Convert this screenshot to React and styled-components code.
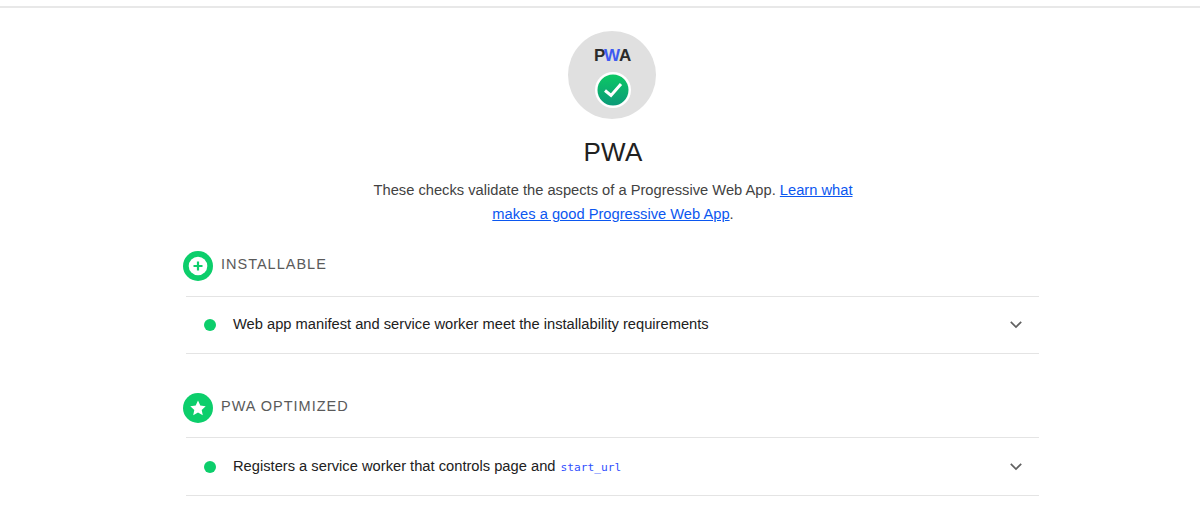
import React from "react";
import styled, { createGlobalStyle } from "styled-components";

const Global = createGlobalStyle`
  html, body { margin: 0; padding: 0; background: #fff; }
  body { font-family: "Liberation Sans", Arial, sans-serif; color: #212121; }
`;

const Page = styled.div`
  width: 1200px;
  height: 530px;
  overflow: hidden;
  padding-top: 6px;
  box-sizing: border-box;
`;
const TopRule = styled.div`
  height: 2px;
  background: #e8e8e8;
`;
const Header = styled.header`
  display: flex;
  flex-direction: column;
  align-items: center;
  padding-top: 23px;
  padding-left: 26px;
`;
const Gauge = styled.div`
  position: relative;
  width: 88px;
  height: 88px;
  margin-right: 2px;
  border-radius: 50%;
  background: #e0e0e0;
  display: flex;
  justify-content: center;
`;
const Logo = styled.div`
  margin-top: 18px;
  height: 14px;
  line-height: 14px;
  font-size: 17px;
  font-weight: 700;
  letter-spacing: -1.2px;
  color: #2b2b2b;
  display: flex;
`;
const LogoW = styled.span`
  color: #3d5af1;
`;
const Badge = styled.div`
  position: absolute;
  left: 27px;
  top: 41px;
  width: 36px;
  height: 36px;
  display: block;
`;
const Title = styled.h1`
  margin: 17px 0 0 0;
  font-size: 26px;
  line-height: 32px;
  font-weight: 400;
  letter-spacing: 0.2px;
  color: #212121;
`;
const Description = styled.p`
  margin: 10px 0 0 0;
  width: 490px;
  font-size: 14.7px;
  line-height: 24px;
  text-align: center;
  color: #424242;
`;
const Link = styled.a`
  color: #0b57f0;
  text-decoration: underline;
`;
const Content = styled.main`
  width: 853px;
  margin: 0 0 0 186px;
`;
const Group = styled.section`
  margin-top: ${(p) => p.$top}px;
`;
const GroupHead = styled.div`
  display: flex;
  align-items: center;
  gap: 8px;
  height: 30px;
  margin: 0 0 ${(p) => p.$gap}px -3px;
`;
const GroupIcon = styled.svg`
  width: 30px;
  height: 30px;
  flex: none;
`;
const GroupTitle = styled.h2`
  margin: -4px 0 0 0;
  font-size: 14.5px;
  font-weight: 400;
  letter-spacing: 1px;
  color: #5a5a5a;
  text-transform: uppercase;
`;
const Row = styled.div`
  display: flex;
  align-items: center;
  height: ${(p) => p.$height}px;
  border-top: 1px solid #e4e4e4;
  border-bottom: 1px solid #e4e4e4;
  padding-left: 18px;
  padding-right: 16px;
`;
const Dot = styled.span`
  width: 12px;
  height: 12px;
  border-radius: 50%;
  background: #0cce6b;
  flex: none;
`;
const RowText = styled.div`
  flex: 1;
  margin-left: 17px;
  margin-top: -2px;
  font-size: 14.7px;
  color: #212121;
`;
const Code = styled.code`
  font-family: "DejaVu Sans Mono", monospace;
  font-size: 11.2px;
  color: #304ffe;
  margin-left: 1px;
`;
const Chevron = styled.svg`
  width: 14px;
  height: 9px;
  flex: none;
  margin-top: -1px;
`;

const Expand = () => (
  <Chevron viewBox="0 0 14 9" fill="none">
    <path d="M1.8 1.8 L7 7 L12.2 1.8" stroke="#616161" strokeWidth="1.7" />
  </Chevron>
);

export default function App() {
  return (
    <Page>
      <Global />
      <TopRule />
      <Header>
        <Gauge>
          <Logo>
            P<LogoW>W</LogoW>A
          </Logo>
          <Badge>
            <svg width="36" height="36" viewBox="0 0 36 36">
              <defs>
                <linearGradient id="badgeFill" x1="0" y1="0" x2="0" y2="1">
                  <stop offset="0" stopColor="#0cc864" />
                  <stop offset="1" stopColor="#0b9a78" />
                </linearGradient>
              </defs>
              <circle cx="18" cy="18" r="18" fill="#fff" />
              <circle cx="18" cy="18" r="15.5" fill="url(#badgeFill)" />
              <path d="M10 18.5 L16 23.5 L26 12" fill="none" stroke="#fff" strokeWidth="3" />
            </svg>
          </Badge>
        </Gauge>
        <Title>PWA</Title>
        <Description>
          These checks validate the aspects of a Progressive Web App.{" "}
          <Link href="#">Learn what makes a good Progressive Web App</Link>.
        </Description>
      </Header>
      <Content>
        <Group $top={25}>
          <GroupHead $gap={15}>
            <GroupIcon viewBox="0 0 30 30">
              <circle cx="15" cy="15" r="15" fill="#0cce6b" />
              <circle cx="15" cy="15" r="9.3" fill="#fff" />
              <path d="M15 10.5v9M10.5 15h9" stroke="#0cce6b" strokeWidth="2.2" />
            </GroupIcon>
            <GroupTitle>Installable</GroupTitle>
          </GroupHead>
          <Row $height={56}>
            <Dot />
            <RowText>Web app manifest and service worker meet the installability requirements</RowText>
            <Expand />
          </Row>
        </Group>
        <Group $top={39}>
          <GroupHead $gap={14}>
            <GroupIcon viewBox="0 0 30 30">
              <circle cx="15" cy="15" r="15" fill="#0cce6b" />
              <path
                d="M15 7.6l2.3 4.9 5.4.7-4 3.7 1.1 5.3-4.8-2.7-4.8 2.7 1.1-5.3-4-3.7 5.4-.7z"
                fill="#fff"
              />
            </GroupIcon>
            <GroupTitle>PWA Optimized</GroupTitle>
          </GroupHead>
          <Row $height={57}>
            <Dot />
            <RowText>
              Registers a service worker that controls page and <Code>start_url</Code>
            </RowText>
            <Expand />
          </Row>
        </Group>
      </Content>
    </Page>
  );
}
